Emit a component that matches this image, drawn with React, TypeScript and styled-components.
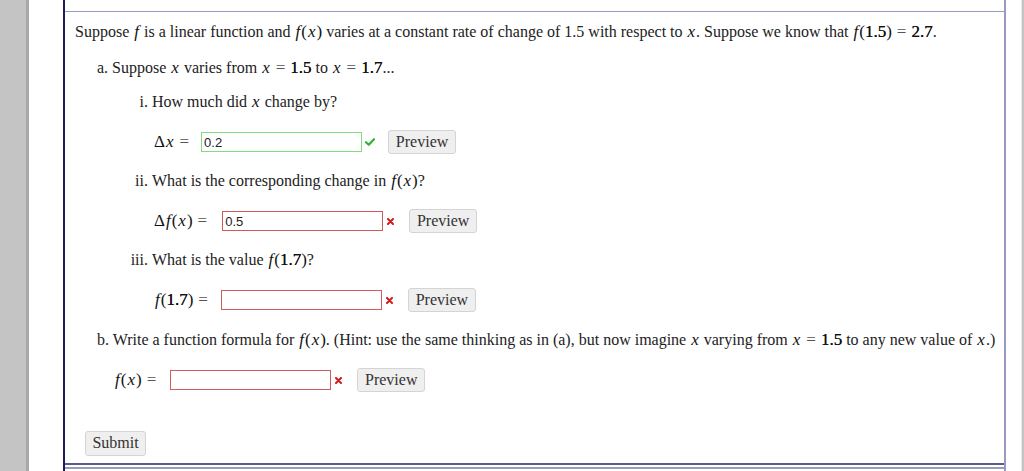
import React from "react";
import styled, { createGlobalStyle } from "styled-components";

const Global = createGlobalStyle`
  html, body { margin: 0; padding: 0; background: #fff; }
  body { font-family: "Liberation Serif", "Times New Roman", serif; font-size: 16px; color: #222; }
  #root { height: 471px; overflow: hidden; }
`;

const Page = styled.div`
  display: flex;
  height: 471px;
  background: #fff;
`;

const LeftStrip = styled.div`
  width: 26px;
  background: #c4c4c4;
  border-right: 3px solid #a8a8a8;
  flex: none;
`;

const Gutter = styled.div<{ $w: number }>`
  width: ${(p) => p.$w}px;
  flex: none;
  background: #fff;
`;

const RightStrip = styled.div`
  flex: 1;
  background: #c4c4c4;
  border-left: 1px solid #e6e6e6;
`;

const Panel = styled.div`
  width: 939px;
  flex: none;
  border-left: 2px solid #1c1c5a;
  border-right: 2px solid #9a9ac0;
  display: flex;
  flex-direction: column;
`;

const TopSpace = styled.div`
  height: 11px;
  border-bottom: 1px solid #9a9ac0;
`;

const Content = styled.div`
  height: 453px;
  padding: 0 0 0 10px;
  box-sizing: border-box;
  border-bottom: 2px solid #5a5a8a;
`;

const BottomSpace = styled.div`
  height: 2px;
  border-bottom: 2px solid #9a9ac0;
`;

const Line = styled.div<{ $mt: number; $indent: number; $h?: number }>`
  margin-top: ${(p) => p.$mt}px;
  padding-left: ${(p) => p.$indent}px;
  height: ${(p) => p.$h ?? 20}px;
  display: flex;
  align-items: center;
  white-space: nowrap;
`;

const Marker = styled.span<{ $w: number }>`
  display: inline-block;
  width: ${(p) => p.$w}px;
  text-align: right;
  margin-right: 4px;
`;

const MathWrap = styled.span`
  font-family: "Liberation Serif", "Times New Roman", serif;
  font-size: 17px;
  color: #111;
`;

const V = styled.i`
  font-style: italic;
  padding: 0 1px;
`;

const N = styled.span`
  font-weight: 500;
  text-shadow: 0 0 0.3px #111;
`;

const Eq = styled.span`
  padding: 0 5px;
  color: #555;
`;

const AnswerRow = styled.div<{ $mt: number; $indent: number }>`
  margin-top: ${(p) => p.$mt}px;
  padding-left: ${(p) => p.$indent}px;
  height: 24px;
  display: flex;
  align-items: center;
`;

const Label = styled.span<{ $gap: number }>`
  margin-right: ${(p) => p.$gap}px;
  display: inline-flex;
  align-items: center;
  flex: none;
`;

const Field = styled.input<{ $ok: boolean }>`
  flex: none;
  width: 161px;
  height: 20px;
  box-sizing: border-box;
  border: 1px solid ${(p) => (p.$ok ? "#7fdf7f" : "#cf5a5a")};
  padding: 0 2px;
  font-family: "Liberation Sans", Arial, sans-serif;
  font-size: 13px;
  color: #222;
  outline: none;
  background: #fff;
`;

const Mark = styled.span`
  flex: none;
  width: 11px;
  margin-left: 2px;
  margin-right: 13px;
  display: flex;
  align-items: center;
  justify-content: center;
`;

const Btn = styled.button<{ $w: number; $h: number }>`
  flex: none;
  width: ${(p) => p.$w}px;
  height: ${(p) => p.$h}px;
  padding: 0;
  background: #efefef;
  border: 1px solid #d4d4d4;
  border-radius: 3px;
  font-family: "Liberation Serif", "Times New Roman", serif;
  font-size: 16px;
  color: #333;
`;

const CheckIcon = () => (
  <svg width="10" height="8" viewBox="0 0 10 8">
    <path d="M1 4.2 L3.8 6.8 L9 1.2" fill="none" stroke="#2fb52f" strokeWidth="2.2" strokeLinecap="round" strokeLinejoin="round" />
  </svg>
);

const CrossIcon = () => (
  <svg width="7" height="7" viewBox="0 0 7 7">
    <path d="M1 1 L6 6 M6 1 L1 6" fill="none" stroke="#d21c1c" strokeWidth="2" strokeLinecap="round" />
  </svg>
);

const Answer = ({
  mt,
  indent,
  label,
  gap,
  value,
  ok,
}: {
  mt: number;
  indent: number;
  label: React.ReactNode;
  gap: number;
  value: string;
  ok: boolean;
}) => (
  <AnswerRow $mt={mt} $indent={indent}>
    <Label $gap={gap}>
      <MathWrap>{label}</MathWrap>
    </Label>
    <Field $ok={ok} defaultValue={value} />
    <Mark>{ok ? <CheckIcon /> : <CrossIcon />}</Mark>
    <Btn $w={68} $h={24}>Preview</Btn>
  </AnswerRow>
);

const fx = (
  <>
    <V>f</V>(<V>x</V>)
  </>
);

export default function App() {
  return (
    <>
      <Global />
      <Page>
        <LeftStrip />
        <Gutter $w={34} />
        <Panel>
          <TopSpace />
          <Content>
            <Line $mt={10} $indent={0}>
              Suppose&nbsp;<MathWrap><V>f</V></MathWrap>&nbsp;is a linear function and&nbsp;
              <MathWrap>{fx}</MathWrap>&nbsp;varies at a constant rate of change of 1.5 with respect to&nbsp;
              <MathWrap><V>x</V></MathWrap>. Suppose we know that&nbsp;
              <MathWrap>
                <V>f</V>(<N>1.5</N>)<Eq>=</Eq><N>2.7</N>
              </MathWrap>
              .
            </Line>
            <Line $mt={16} $indent={22}>
              a. Suppose&nbsp;<MathWrap><V>x</V></MathWrap>&nbsp;varies from&nbsp;
              <MathWrap>
                <V>x</V><Eq>=</Eq><N>1.5</N>
              </MathWrap>
              &nbsp;to&nbsp;
              <MathWrap>
                <V>x</V><Eq>=</Eq><N>1.7</N>
              </MathWrap>
              ...
            </Line>
            <Line $mt={14} $indent={53}>
              <Marker $w={20}>i.</Marker>How much did&nbsp;<MathWrap><V>x</V></MathWrap>&nbsp;change by?
            </Line>
            <Answer
              mt={18}
              indent={79}
              gap={7}
              ok
              value="0.2"
              label={
                <>
                  Δ<V>x</V>
                  <Eq>=</Eq>
                </>
              }
            />
            <Line $mt={17} $indent={53}>
              <Marker $w={20}>ii.</Marker>What is the corresponding change in&nbsp;<MathWrap>{fx}</MathWrap>?
            </Line>
            <Answer
              mt={18}
              indent={79}
              gap={10}
              ok={false}
              value="0.5"
              label={
                <>
                  Δ<V>f</V>(<V>x</V>)<Eq>=</Eq>
                </>
              }
            />
            <Line $mt={17} $indent={53}>
              <Marker $w={20}>iii.</Marker>What is the value&nbsp;
              <MathWrap>
                <V>f</V>(<N>1.7</N>)
              </MathWrap>
              ?
            </Line>
            <Answer
              mt={18}
              indent={79}
              gap={8}
              ok={false}
              value=""
              label={
                <>
                  <V>f</V>(<N>1.7</N>)<Eq>=</Eq>
                </>
              }
            />
            <Line $mt={18} $indent={22}>
              b. Write a function formula for&nbsp;<MathWrap>{fx}</MathWrap>. (Hint: use the same thinking as in (a), but now imagine&nbsp;
              <MathWrap><V>x</V></MathWrap>&nbsp;varying from&nbsp;
              <MathWrap>
                <V>x</V><Eq>=</Eq><N>1.5</N>
              </MathWrap>
              &nbsp;to any new value of&nbsp;<MathWrap><V>x</V></MathWrap>.)
            </Line>
            <Answer
              mt={18}
              indent={39}
              gap={9}
              ok={false}
              value=""
              label={
                <>
                  {fx}
                  <Eq>=</Eq>
                </>
              }
            />
            <AnswerRow $mt={39} $indent={10}>
              <Btn $w={61} $h={25}>Submit</Btn>
            </AnswerRow>
          </Content>
          <BottomSpace />
        </Panel>
        <Gutter $w={15} />
        <RightStrip />
      </Page>
    </>
  );
}
